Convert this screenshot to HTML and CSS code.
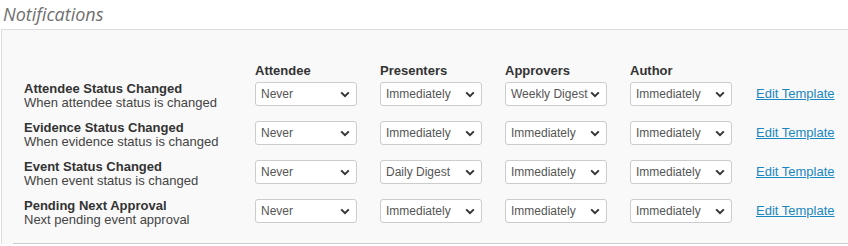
FILE: index.html
```html
<!DOCTYPE html>
<html lang="en">
<head>
    <meta charset="UTF-8">
    <title>Notifications</title>
    <link rel="stylesheet" href="styles.css">
</head>
<body>
    <h2 class="page-title">Notifications</h2>

    <div class="panel">
        <div class="notify-grid">
            <div class="col-head"></div>
            <div class="col-head">Attendee</div>
            <div class="col-head">Presenters</div>
            <div class="col-head">Approvers</div>
            <div class="col-head">Author</div>
            <div class="col-head"></div>

            <div class="event">
                <div class="event-name">Attendee Status Changed</div>
                <div class="event-desc">When attendee status is changed</div>
            </div>
            <select class="freq"><option>Never</option></select>
            <select class="freq"><option>Immediately</option></select>
            <select class="freq"><option>Weekly Digest</option></select>
            <select class="freq"><option>Immediately</option></select>
            <a class="edit-link" href="#">Edit Template</a>

            <div class="event">
                <div class="event-name">Evidence Status Changed</div>
                <div class="event-desc">When evidence status is changed</div>
            </div>
            <select class="freq"><option>Never</option></select>
            <select class="freq"><option>Immediately</option></select>
            <select class="freq"><option>Immediately</option></select>
            <select class="freq"><option>Immediately</option></select>
            <a class="edit-link" href="#">Edit Template</a>

            <div class="event">
                <div class="event-name">Event Status Changed</div>
                <div class="event-desc">When event status is changed</div>
            </div>
            <select class="freq"><option>Never</option></select>
            <select class="freq"><option>Daily Digest</option></select>
            <select class="freq"><option>Immediately</option></select>
            <select class="freq"><option>Immediately</option></select>
            <a class="edit-link" href="#">Edit Template</a>

            <div class="event">
                <div class="event-name">Pending Next Approval</div>
                <div class="event-desc">Next pending event approval</div>
            </div>
            <select class="freq"><option>Never</option></select>
            <select class="freq"><option>Immediately</option></select>
            <select class="freq"><option>Immediately</option></select>
            <select class="freq"><option>Immediately</option></select>
            <a class="edit-link" href="#">Edit Template</a>
        </div>
        <div class="divider"></div>
    </div>
</body>
</html>
```

FILE: styles.css
```css
body {
    margin: 0;
    padding-top: 2px;
    font-family: "Liberation Sans", Arial, sans-serif;
    background: #fff;
    overflow: hidden;
}
.page-title {
    margin: 0;
    padding-left: 3px;
    font-family: "Open Sans", sans-serif;
    font-style: italic;
    font-weight: normal;
    font-size: 18px;
    line-height: 24px;
    color: #6f6f6f;
}
.panel {
    margin-top: 3px;
    margin-left: 1px;
    width: 870px;
    padding: 33px 0 0 11px;
    background: #f9f9f9;
    border: 1px solid #ddd;
    border-bottom: none;
}
.notify-grid {
    margin-left: 11px;
    display: grid;
    grid-template-columns: 208px 102px 102px 102px 102px auto;
    grid-template-rows: auto repeat(4, 39px);
    column-gap: 23px;
}
.col-head {
    font-size: 13px;
    font-weight: bold;
    line-height: 15px;
    color: #333;
    padding-bottom: 4px;
}
.event {
    font-size: 13px;
    line-height: 14px;
    color: #333;
}
.event-name {
    font-weight: bold;
}
.event-desc {
    color: #444;
}
.freq {
    appearance: none;
    -webkit-appearance: none;
    width: 102px;
    height: 24px;
    margin: 0;
    padding: 0 0 0 5px;
    font-family: "Liberation Sans", Arial, sans-serif;
    font-size: 12px;
    color: #555;
    background: #fff url("data:image/svg+xml,%3Csvg xmlns='http://www.w3.org/2000/svg' width='10' height='7' viewBox='0 0 10 7'%3E%3Cpath d='M1.2 1.4l3.8 3.8 3.8-3.8' fill='none' stroke='%23333' stroke-width='2'/%3E%3C/svg%3E") no-repeat right 6px center;
    border: 1px solid #ccc;
    border-radius: 3px;
}
.edit-link {
    padding-left: 1px;
    font-size: 13px;
    line-height: 24px;
    height: 24px;
    color: #1a87c2;
    text-decoration: underline;
    white-space: nowrap;
}
.divider {
    margin-top: 5px;
    border-top: 1px solid #ccc;
}
```
